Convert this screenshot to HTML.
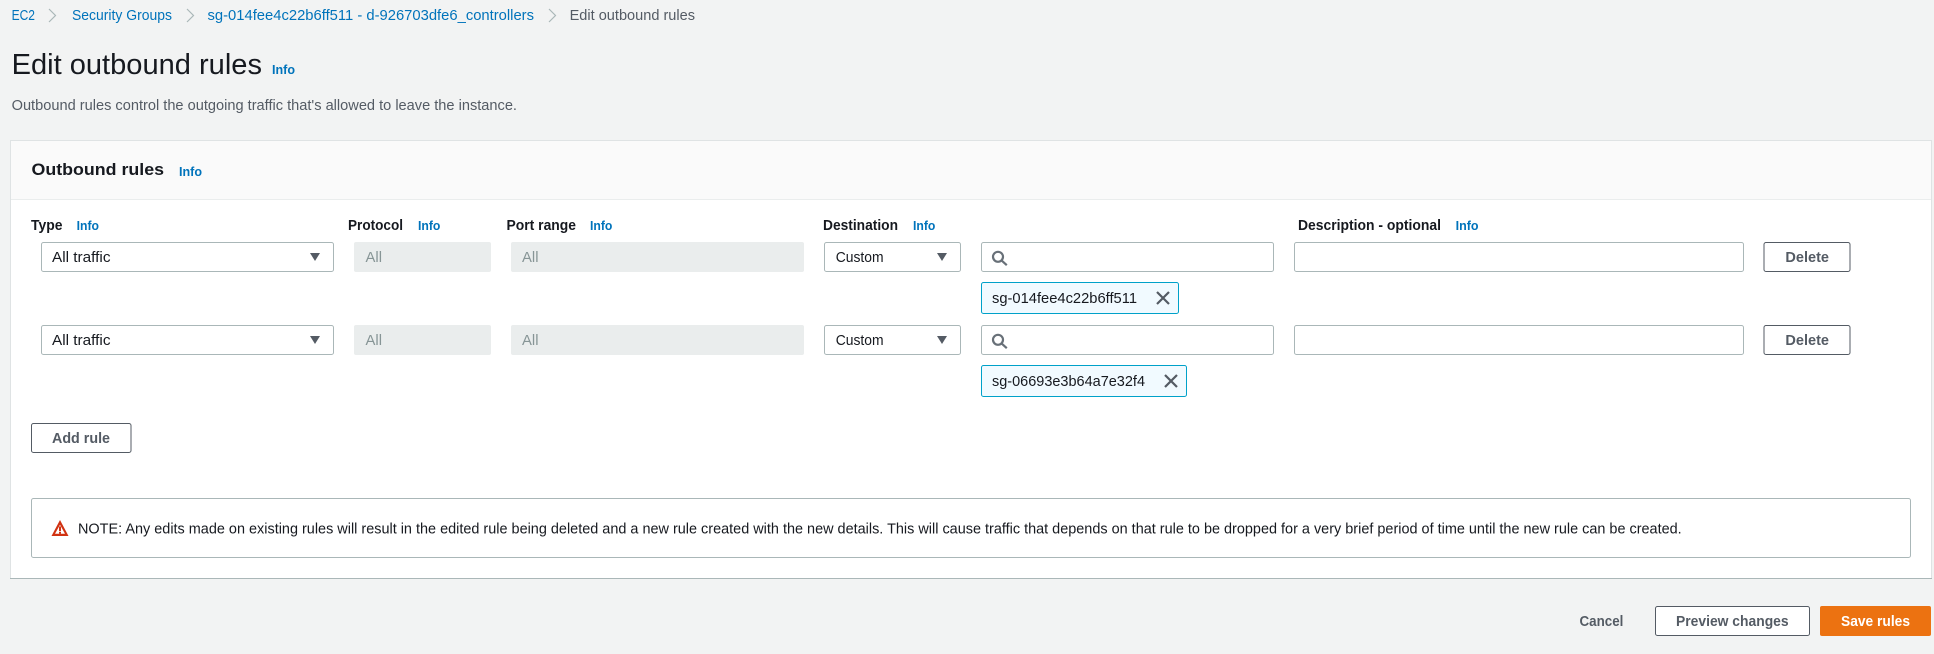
<!DOCTYPE html>
<html lang="en"><head><meta charset="utf-8"><title>Edit outbound rules</title>
<style>
html,body{margin:0;padding:0;width:1934px;height:654px;overflow:hidden;background:#f2f3f3}
svg{display:block}
text{font-family:"Liberation Sans",sans-serif;font-size:14.500px;fill:#16191f}
.l{fill:#0073bb}
.i{fill:#0073bb;font-size:12.500px;font-weight:bold}
.g{fill:#545b64}
.b{font-weight:bold;font-size:14.500px}
.d{fill:#879596}
.f{fill:#fff;stroke:#aab7b8;stroke-width:1}
.btn{fill:#fff;stroke:#545b64;stroke-width:1}
.tok{fill:#f1faff;stroke:#00a1c9;stroke-width:1}
.dis{fill:#eaeded}
.c{fill:none;stroke:#aab7b8;stroke-width:1.200}
.x{fill:none;stroke:#545b64;stroke-width:2.200}
.s{fill:none;stroke:#687078;stroke-width:2.200}
</style></head><body>
<svg xmlns="http://www.w3.org/2000/svg" width="1934" height="654" viewBox="0 0 1934 654">
<rect width="1934" height="654" fill="#f2f3f3"/>

<!-- breadcrumb -->
<text class="l" x="11.600" y="20" textLength="23.400" lengthAdjust="spacingAndGlyphs">EC2</text>
<path class="c" d="M49 9l6.500 6.500-6.500 6.500"/>
<text class="l" x="72" y="20" textLength="100" lengthAdjust="spacingAndGlyphs">Security Groups</text>
<path class="c" d="M187 9l6.500 6.500-6.500 6.500"/>
<text class="l" x="207.500" y="20" textLength="326.500" lengthAdjust="spacingAndGlyphs">sg-014fee4c22b6ff511 - d-926703dfe6_controllers</text>
<path class="c" d="M549 9l6.500 6.500-6.500 6.500"/>
<text class="g" x="569.600" y="20" textLength="125.400" lengthAdjust="spacingAndGlyphs">Edit outbound rules</text>

<!-- page header -->
<text x="11.600" y="74" style="font-size:29px" textLength="250.400" lengthAdjust="spacingAndGlyphs">Edit outbound rules</text>
<text class="i" x="272" y="74" textLength="23" lengthAdjust="spacingAndGlyphs">Info</text>
<text class="g" x="11.600" y="110" textLength="505.400" lengthAdjust="spacingAndGlyphs">Outbound rules control the outgoing traffic that's allowed to leave the instance.</text>

<!-- card -->
<rect x="10" y="140" width="1922" height="439" fill="#dfe3e4"/>
<rect x="11" y="141" width="1920" height="437" fill="#fff"/>
<rect x="11" y="141" width="1920" height="58" fill="#fafafa"/>
<rect x="11" y="199" width="1920" height="1" fill="#eaeded"/>
<rect x="10" y="578" width="1922" height="1" fill="#aab7b8"/>
<text class="b" x="31.500" y="175" style="font-size:17px" textLength="132.500" lengthAdjust="spacingAndGlyphs">Outbound rules</text>
<text class="i" x="179" y="176" textLength="23" lengthAdjust="spacingAndGlyphs">Info</text>

<!-- column labels -->
<text class="b" x="31" y="230" textLength="31.500" lengthAdjust="spacingAndGlyphs">Type</text>
<text class="i" x="76.600" y="230" textLength="22.400" lengthAdjust="spacingAndGlyphs">Info</text>
<text class="b" x="348" y="230" textLength="55" lengthAdjust="spacingAndGlyphs">Protocol</text>
<text class="i" x="418" y="230" textLength="22.400" lengthAdjust="spacingAndGlyphs">Info</text>
<text class="b" x="506.500" y="230" textLength="69.500" lengthAdjust="spacingAndGlyphs">Port range</text>
<text class="i" x="590" y="230" textLength="22.400" lengthAdjust="spacingAndGlyphs">Info</text>
<text class="b" x="823" y="230" textLength="75" lengthAdjust="spacingAndGlyphs">Destination</text>
<text class="i" x="913" y="230" textLength="22.400" lengthAdjust="spacingAndGlyphs">Info</text>
<text class="b" x="1298" y="230" textLength="143" lengthAdjust="spacingAndGlyphs">Description - optional</text>
<text class="i" x="1455.600" y="230" textLength="22.900" lengthAdjust="spacingAndGlyphs">Info</text>

<!-- row 1 -->
<rect class="f" x="41.500" y="242.500" width="292" height="29" rx="2"/>
<text x="52" y="262" textLength="58.500" lengthAdjust="spacingAndGlyphs">All traffic</text>
<path d="M310 253h10l-5 8z" fill="#545b64"/>
<rect class="dis" x="354" y="242" width="137" height="30" rx="2"/>
<text class="d" x="365.500" y="262" textLength="16.500" lengthAdjust="spacingAndGlyphs">All</text>
<rect class="dis" x="511" y="242" width="293" height="30" rx="2"/>
<text class="d" x="522" y="262" textLength="16.500" lengthAdjust="spacingAndGlyphs">All</text>
<rect class="f" x="824.500" y="242.500" width="136" height="29" rx="2"/>
<text x="835.700" y="262" textLength="47.900" lengthAdjust="spacingAndGlyphs">Custom</text>
<path d="M937 253h10l-5 8z" fill="#545b64"/>
<rect class="f" x="981.500" y="242.500" width="292" height="29" rx="2"/>
<circle class="s" cx="998" cy="256.800" r="5"/>
<path class="s" d="M1001.800 260.700l5 4.500"/>
<rect class="tok" x="981.500" y="282.500" width="197" height="31" rx="2"/>
<text x="992" y="303" textLength="145" lengthAdjust="spacingAndGlyphs">sg-014fee4c22b6ff511</text>
<path class="x" d="M1157 292l12 12M1169 292l-12 12"/>
<rect class="f" x="1294.500" y="242.500" width="449" height="29" rx="2"/>
<rect class="btn" x="1764" y="242.500" width="86" height="29" rx="2"/>
<text class="g b" x="1785.400" y="262" textLength="43.600" lengthAdjust="spacingAndGlyphs">Delete</text>

<!-- row 2 -->
<rect class="f" x="41.500" y="325.500" width="292" height="29" rx="2"/>
<text x="52" y="345" textLength="58.500" lengthAdjust="spacingAndGlyphs">All traffic</text>
<path d="M310 336h10l-5 8z" fill="#545b64"/>
<rect class="dis" x="354" y="325" width="137" height="30" rx="2"/>
<text class="d" x="365.500" y="345" textLength="16.500" lengthAdjust="spacingAndGlyphs">All</text>
<rect class="dis" x="511" y="325" width="293" height="30" rx="2"/>
<text class="d" x="522" y="345" textLength="16.500" lengthAdjust="spacingAndGlyphs">All</text>
<rect class="f" x="824.500" y="325.500" width="136" height="29" rx="2"/>
<text x="835.700" y="345" textLength="47.900" lengthAdjust="spacingAndGlyphs">Custom</text>
<path d="M937 336h10l-5 8z" fill="#545b64"/>
<rect class="f" x="981.500" y="325.500" width="292" height="29" rx="2"/>
<circle class="s" cx="998" cy="339.800" r="5"/>
<path class="s" d="M1001.800 343.700l5 4.500"/>
<rect class="tok" x="981.500" y="365.500" width="205" height="31" rx="2"/>
<text x="992" y="386" textLength="153" lengthAdjust="spacingAndGlyphs">sg-06693e3b64a7e32f4</text>
<path class="x" d="M1165 375l12 12M1177 375l-12 12"/>
<rect class="f" x="1294.500" y="325.500" width="449" height="29" rx="2"/>
<rect class="btn" x="1764" y="325.500" width="86" height="29" rx="2"/>
<text class="g b" x="1785.400" y="345" textLength="43.600" lengthAdjust="spacingAndGlyphs">Delete</text>

<!-- add rule -->
<rect class="btn" x="31.500" y="423.500" width="99.500" height="29" rx="2"/>
<text class="g b" x="52" y="443" textLength="58" lengthAdjust="spacingAndGlyphs">Add rule</text>

<!-- note -->
<rect class="f" x="31.500" y="498.500" width="1879" height="59" rx="2"/>
<path fill-rule="evenodd" fill="#d13212" d="M60 520l8.500 16h-17zM60 524.800l-5 9h10z"/>
<path d="M59 526.500h2v4.500h-2zM59 531.800h2v2h-2z" fill="#d13212"/>
<text x="78" y="533.500" textLength="1603.700" lengthAdjust="spacingAndGlyphs">NOTE: Any edits made on existing rules will result in the edited rule being deleted and a new rule created with the new details. This will cause traffic that depends on that rule to be dropped for a very brief period of time until the new rule can be created.</text>

<!-- footer -->
<text class="g b" x="1579.500" y="626" textLength="43.900" lengthAdjust="spacingAndGlyphs">Cancel</text>
<rect class="btn" x="1655.500" y="606.500" width="154" height="29" rx="2"/>
<text class="g b" x="1676" y="626" textLength="112.600" lengthAdjust="spacingAndGlyphs">Preview changes</text>
<rect x="1820" y="606" width="111" height="30" rx="2" fill="#ec7211"/>
<text class="b" x="1841" y="626" style="fill:#fff" textLength="69" lengthAdjust="spacingAndGlyphs">Save rules</text>
</svg>
</body></html>
